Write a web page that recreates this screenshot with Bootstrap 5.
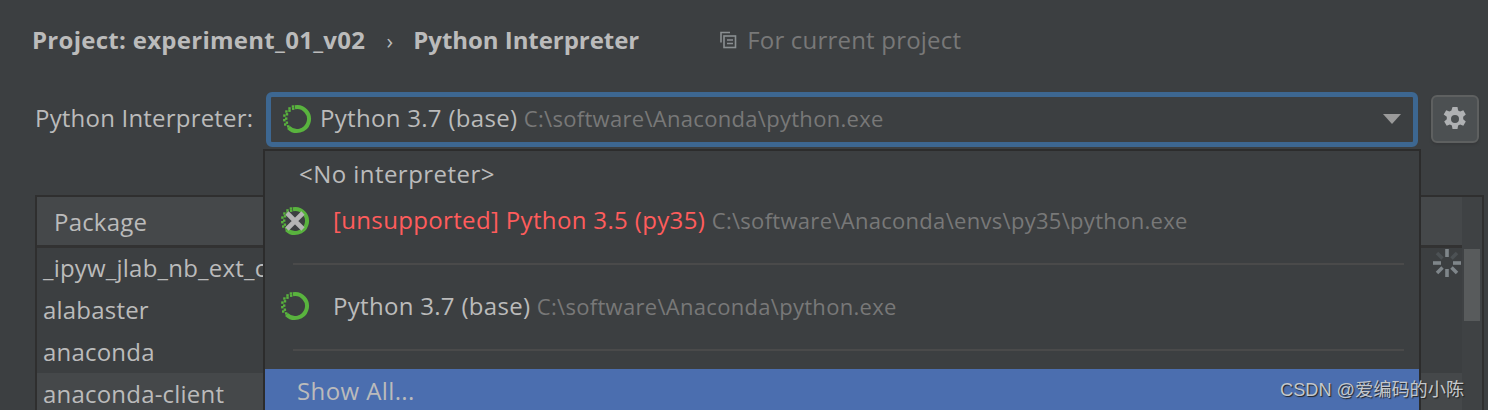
<!DOCTYPE html>
<html lang="en">
<head>
<meta charset="utf-8">
<title>Python Interpreter</title>
<link href="https://cdn.jsdelivr.net/npm/bootstrap@5.3.0/dist/css/bootstrap.min.css" rel="stylesheet">
<style>
html,body{margin:0;background:#3c3f41;}
.ide-stage{position:relative;width:1488px;height:410px;overflow:hidden;background:#3c3f41;color:#bbb;font-family:"Open Sans","Noto Sans",sans-serif;font-size:24px;line-height:32px;letter-spacing:.2px;}
.crumbs{height:32px;margin-top:24px;padding-left:32px;}
.crumbs b{font-weight:700;color:#bbb;letter-spacing:.28px;}
.crumbs b.crumb-page{letter-spacing:-.05px;margin-left:-1px;}
.crumb-sep{width:49px;text-align:center;font-size:22px;}
.crumb-scope{margin-left:80px;color:#787878;gap:10px;}
.interp-row{margin-top:38px;height:48px;padding-left:35px;}
.interp-label{width:231px;flex:none;}
.combo{width:1152px;height:55px;flex:none;margin-top:3px;border:5px solid #3d6791;border-radius:6px;padding:0 0 2px 11px;gap:8px;background:#3c3f41;}
.combo-text{letter-spacing:.3px;margin-bottom:2px;}
.muted-path{color:#787878;font-size:22px;letter-spacing:.3px;}
.combo-arrow{margin-left:auto;margin-right:12px;width:0;height:0;border-left:9px solid transparent;border-right:9px solid transparent;border-top:10px solid #9a9a9a;}
.gear-btn{width:48px;height:48px;flex:none;margin-left:13px;margin-top:1px;background:#4c5052;border:2px solid #5e6060;border-radius:6px;box-shadow:0 2px 2px #37393b;}
.pkg-table{position:absolute;left:35px;top:195px;width:1449px;height:230px;border:2px solid #2f2f2f;background:#3c3f41;}
.pkg-head{height:48px;padding-left:17px;padding-top:2px;background:#45484a;margin-right:20px;}
.pkg-line{height:3px;background:#323232;margin-right:20px;}
.pkg-cell{height:42px;padding-left:6px;margin-right:20px;}
.pkg-first{margin-top:-1px;}
.pkg-cell.is-sel{background:#45484a;}
.pkg-track{position:absolute;top:0;right:0;width:20px;bottom:0;background:#3f4244;}
.pkg-thumb{position:absolute;top:52px;left:2px;width:16px;height:72px;background:#585b5c;}
.pkg-spin{position:absolute;left:1396px;top:52px;}
.popup{position:absolute;left:263px;top:149px;width:1158px;height:270px;background:#3c3f41;border:2px solid #2c2c2c;border-bottom:0;}
.pop-plain{height:49px;padding-left:34px;padding-top:7px;letter-spacing:.45px;}
.pop-item{height:42px;padding-left:15px;gap:24px;}
.pop-err{color:#ff5c5c;letter-spacing:.35px;margin-bottom:2px;margin-left:-1px;}
.pop-err,.pop-py{white-space:nowrap;}
.pop-py{letter-spacing:.3px;margin-left:-1px;}
.pop-rule{height:2px;background:#4a4a4a;margin:0 15px 0 28px;}
.gap-a{height:21px;}
.gap-b{height:20px;}
.gap-c{height:22px;}
.pop-all{position:absolute;left:0;right:0;top:218px;height:60px;background:#4b6eaf;padding-left:32px;padding-top:6px;color:#bbb;letter-spacing:.4px;}
.watermark{position:absolute;left:1280px;top:379px;font-family:"Liberation Sans","Noto Sans CJK SC",sans-serif;font-size:18.2px;line-height:22px;letter-spacing:0;color:#c4c8cc;text-shadow:1px 1px 1px #222;}
.icon-defs{display:none;}
</style>
</head>
<body>
<svg class="icon-defs" xmlns="http://www.w3.org/2000/svg">
  <symbol id="ana-ring" viewBox="0 0 30 30">
    <path d="M12.900 3.200A12 12 0 1 1 6.500 23.500" fill="none" stroke="#59b33e" stroke-width="4"/>
    <g fill="#59b33e">
      <rect x="5" y="21.200" width="2.400" height="2.400"/><rect x="2" y="19.300" width="2.400" height="2.400"/>
      <rect x="3.700" y="17.500" width="2.400" height="2.400"/><rect x="1.100" y="15" width="2.400" height="2.400"/>
      <rect x="3" y="13.400" width="2.400" height="2.400"/><rect x="1.200" y="10.400" width="2.400" height="2.400"/>
      <rect x="3.800" y="9.100" width="2.400" height="2.400"/><rect x="3.200" y="6.300" width="2.400" height="2.400"/>
      <rect x="6.300" y="5.500" width="2.400" height="2.400"/><rect x="6.300" y="3.200" width="2.400" height="2.400"/>
      <rect x="10" y="3.500" width="2.400" height="2.400"/><rect x="9.700" y="1.300" width="2.400" height="2.400"/>
    </g>
  </symbol>
</svg>
<div class="ide-stage">
  <div class="crumbs d-flex align-items-center">
    <b>Project: experiment_01_v02</b>
    <span class="crumb-sep">›</span>
    <b class="crumb-page">Python Interpreter</b>
    <span class="crumb-scope d-flex align-items-center">
      <svg width="18" height="18" viewBox="0 0 18 18" fill="none" stroke="#8a8f92" stroke-width="1.6"><path d="M11 1.500H2v10"/><rect x="5" y="5" width="11.500" height="11.500"/><path d="M8 9h6M8 12.500h6"/></svg>
      For current project
    </span>
  </div>
  <div class="interp-row d-flex align-items-center">
    <span class="interp-label">Python Interpreter:</span>
    <div class="combo d-flex align-items-center">
      <svg width="30" height="30"><use href="#ana-ring"/></svg>
      <span class="text-nowrap combo-text">Python 3.7 (base) <span class="muted-path">C:\software\Anaconda\python.exe</span></span>
      <span class="combo-arrow"></span>
    </div>
    <div class="gear-btn d-flex align-items-center justify-content-center">
      <svg width="26" height="26" viewBox="0 0 26 26"><path fill="#afb1b3" fill-rule="evenodd" d="M10.500 1h5l.6 3.400 2 1.100 3.200-1.200 2.500 4.300-2.600 2.200v2.400l2.600 2.200-2.500 4.300-3.200-1.200-2 1.100-.6 3.400h-5l-.6-3.400-2-1.100-3.200 1.200-2.500-4.300 2.600-2.200v-2.400L1.700 8.600l2.500-4.300 3.200 1.200 2-1.100zM13 9a4 4 0 1 0 0 8 4 4 0 0 0 0-8z"/></svg>
    </div>
  </div>

  <div class="pkg-table">
    <div class="pkg-head d-flex align-items-center">Package</div>
    <div class="pkg-line"></div>
    <div class="pkg-cell pkg-first d-flex align-items-center">_ipyw_jlab_nb_ext_conf</div>
    <div class="pkg-cell d-flex align-items-center">alabaster</div>
    <div class="pkg-cell d-flex align-items-center">anaconda</div>
    <div class="pkg-cell is-sel d-flex align-items-center">anaconda-client</div>
    <div class="pkg-track"><div class="pkg-thumb"></div></div>
    <svg class="pkg-spin" width="28" height="28" viewBox="0 0 28 28" stroke-width="3.6" fill="none"><path stroke="#7f868a" d="M14 0v8"/><path stroke="#4c5154" d="M24 4l-5.500 5.500"/><path stroke="#7f868a" d="M28 14h-8"/><path stroke="#7f868a" d="M24 24l-5.500-5.500"/><path stroke="#7f868a" d="M14 28v-8"/><path stroke="#7f868a" d="M4 24l5.500-5.500"/><path stroke="#7f868a" d="M0 14h8"/><path stroke="#4c5154" d="M4 4l5.500 5.500"/></svg>
  </div>

  <div class="popup">
    <div class="pop-plain">&lt;No interpreter&gt;</div>
    <div class="pop-item d-flex align-items-center">
      <svg width="30" height="30" viewBox="0 0 30 30" fill="none"><use href="#ana-ring" width="30" height="30"/><path d="M7 7l16 16M23 7L7 23" stroke="#b4b4b4" stroke-width="4.600"/></svg>
      <span class="pop-err">[unsupported] Python 3.5 (py35) <span class="muted-path">C:\software\Anaconda\envs\py35\python.exe</span></span>
    </div>
    <div class="gap-a"></div>
    <div class="pop-rule"></div>
    <div class="gap-b"></div>
    <div class="pop-item d-flex align-items-center">
      <svg width="30" height="30"><use href="#ana-ring"/></svg>
      <span class="pop-py">Python 3.7 (base) <span class="muted-path">C:\software\Anaconda\python.exe</span></span>
    </div>
    <div class="gap-c"></div>
    <div class="pop-rule"></div>
    <div class="pop-all">Show All...</div>
  </div>

  <div class="watermark">CSDN @爱编码的小陈</div>
</div>
<script src="https://cdn.jsdelivr.net/npm/bootstrap@5.3.0/dist/js/bootstrap.bundle.min.js"></script>
</body>
</html>
